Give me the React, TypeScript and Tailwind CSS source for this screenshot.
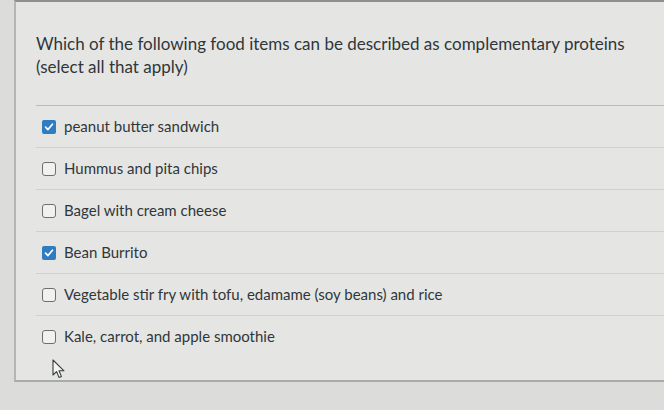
import React from 'react';

const options = [
  { label: 'peanut butter sandwich', checked: true },
  { label: 'Hummus and pita chips', checked: false },
  { label: 'Bagel with cream cheese', checked: false },
  { label: 'Bean Burrito', checked: true },
  { label: 'Vegetable stir fry with tofu, edamame (soy beans) and rice', checked: false },
  { label: 'Kale, carrot, and apple smoothie', checked: false },
];

const Box: React.FC<{ checked: boolean }> = ({ checked }) =>
  checked ? (
    <span className="flex h-[14px] w-[14px] items-center justify-center rounded-[2px] bg-[#2f7cc0]">
      <svg viewBox="0 0 14 14" className="h-[12px] w-[12px]">
        <path d="M3 7.2 L5.8 10 L11 3.8" fill="none" stroke="#fff" strokeWidth="2" strokeLinecap="round" strokeLinejoin="round" />
      </svg>
    </span>
  ) : (
    <span className="h-[14px] w-[14px] rounded-[3px] border-[1.5px] border-[#6c7073] bg-[#f1f2f0]" />
  );

export default function App() {
  return (
    <div className="relative h-[410px] w-[664px] overflow-hidden bg-[#dcdddb] font-['Lato',sans-serif] text-[#30363a]">
      <div className="ml-[14px] h-[382px] w-[660px] border-t-2 border-b-2 border-l-2 border-t-[#8e908f] border-b-[#a9abaa] border-l-[#b4b6b4] bg-[#e5e6e4]">
        <div className="pl-[20px] pr-[24px] pt-[30px] pb-[27px] text-[17px] leading-[23px]">
          <p>Which of the following food items can be described as complementary proteins</p>
          <p>(select all that apply)</p>
        </div>
        <div className="ml-[20px]">
          {options.map((o, i) => (
            <div
              key={o.label}
              className={`flex h-[42px] items-center gap-[8px] border-t pl-[6px] text-[15px] ${
                i === 0 ? 'border-[#b9bbb9]' : 'border-[#cfd1cf]'
              }`}
            >
              <Box checked={o.checked} />
              <span>{o.label}</span>
            </div>
          ))}
        </div>
      </div>
      <svg viewBox="0 0 14 20" className="absolute left-[52px] top-[359px] h-[20px] w-[14px]">
        <path d="M1 1 L1 16 L4.6 12.6 L7 18.4 L9.4 17.4 L7 11.8 L12 11.8 Z" fill="#f4f4f2" stroke="#3a3d3f" strokeWidth="1.1" strokeLinejoin="round" />
      </svg>
    </div>
  );
}
